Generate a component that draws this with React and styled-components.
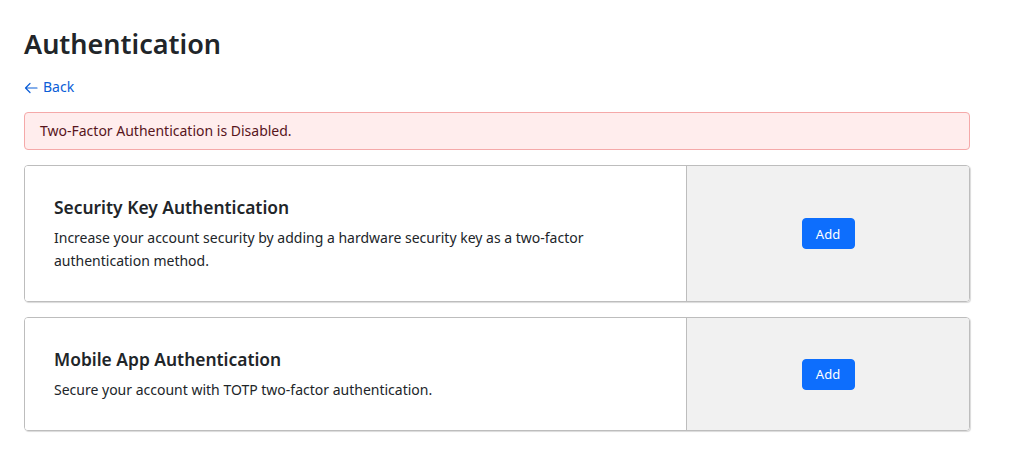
import React from 'react';
import styled, { createGlobalStyle } from 'styled-components';

const GlobalStyle = createGlobalStyle`
    body {
        margin: 0;
        background: #ffffff;
        font-family: "Noto Sans", "Open Sans", sans-serif;
        color: #212529;
    }
`;

const Page = styled.div`
    padding: 22px 54px 20px 24px;
    display: flex;
    flex-direction: column;
`;

const Title = styled.h1`
    margin: 0;
    font-size: 27px;
    font-weight: 600;
    line-height: 44px;
    color: #212529;
`;

const BackLink = styled.a`
    margin-top: 10px;
    font-size: 14px;
    line-height: 22px;
    color: #0b5ed7;
    text-decoration: none;
    display: flex;
    align-items: center;
    gap: 5px;
    width: fit-content;
`;

const Arrow = styled.svg`
    width: 14px;
    height: 12px;
    margin-top: 1px;
`;

const Alert = styled.div`
    margin-top: 14px;
    padding: 8px 15px;
    font-size: 14px;
    line-height: 20px;
    color: #58151c;
    background: #ffeded;
    border: 1px solid #f5a9a9;
    border-radius: 4px;
    height: 38px;
    box-sizing: border-box;
`;

const Card = styled.div`
    margin-top: 15px;
    display: flex;
    border: 1px solid #bdbdbd;
    border-radius: 4px;
    box-shadow: 1px 1px 1px rgba(0, 0, 0, 0.15);
    overflow: hidden;
`;

const CardBody = styled.div`
    flex: 1;
    padding: 29px 29px 29px;
    background: #ffffff;
    border-right: 1px solid #bdbdbd;
`;

const CardTitle = styled.h2`
    margin: 0 0 7px;
    font-size: 17.4px;
    font-weight: 600;
    line-height: 24px;
    color: #212529;
`;

const CardText = styled.p`
    margin: 0;
    font-size: 14px;
    line-height: 23px;
    max-width: 560px;
    color: #212529;
`;

const CardAction = styled.div`
    width: 282px;
    background: #f1f1f1;
    display: flex;
    align-items: center;
    justify-content: center;
`;

const AddButton = styled.button`
    width: 53px;
    height: 31px;
    border: 1px solid #0d6efd;
    border-radius: 4px;
    background: #0d6efd;
    color: #ffffff;
    font-family: inherit;
    font-size: 13px;
    cursor: pointer;
`;

const methods = [
    {
        title: 'Security Key Authentication',
        text: 'Increase your account security by adding a hardware security key as a two-factor authentication method.',
    },
    {
        title: 'Mobile App Authentication',
        text: 'Secure your account with TOTP two-factor authentication.',
    },
];

export default function App() {
    return (
        <>
            <GlobalStyle />
            <Page>
                <Title>Authentication</Title>
                <BackLink href="#">
                    <Arrow viewBox="0 0 14 12" fill="none" stroke="currentColor" strokeWidth="1.2" strokeLinecap="round" strokeLinejoin="round">
                        <path d="M13 6H1.5M6 1.5L1.5 6L6 10.5" />
                    </Arrow>
                    <span>Back</span>
                </BackLink>
                <Alert>Two-Factor Authentication is Disabled.</Alert>
                {methods.map(m => (
                    <Card key={m.title}>
                        <CardBody>
                            <CardTitle>{m.title}</CardTitle>
                            <CardText>{m.text}</CardText>
                        </CardBody>
                        <CardAction>
                            <AddButton>Add</AddButton>
                        </CardAction>
                    </Card>
                ))}
            </Page>
        </>
    );
}
